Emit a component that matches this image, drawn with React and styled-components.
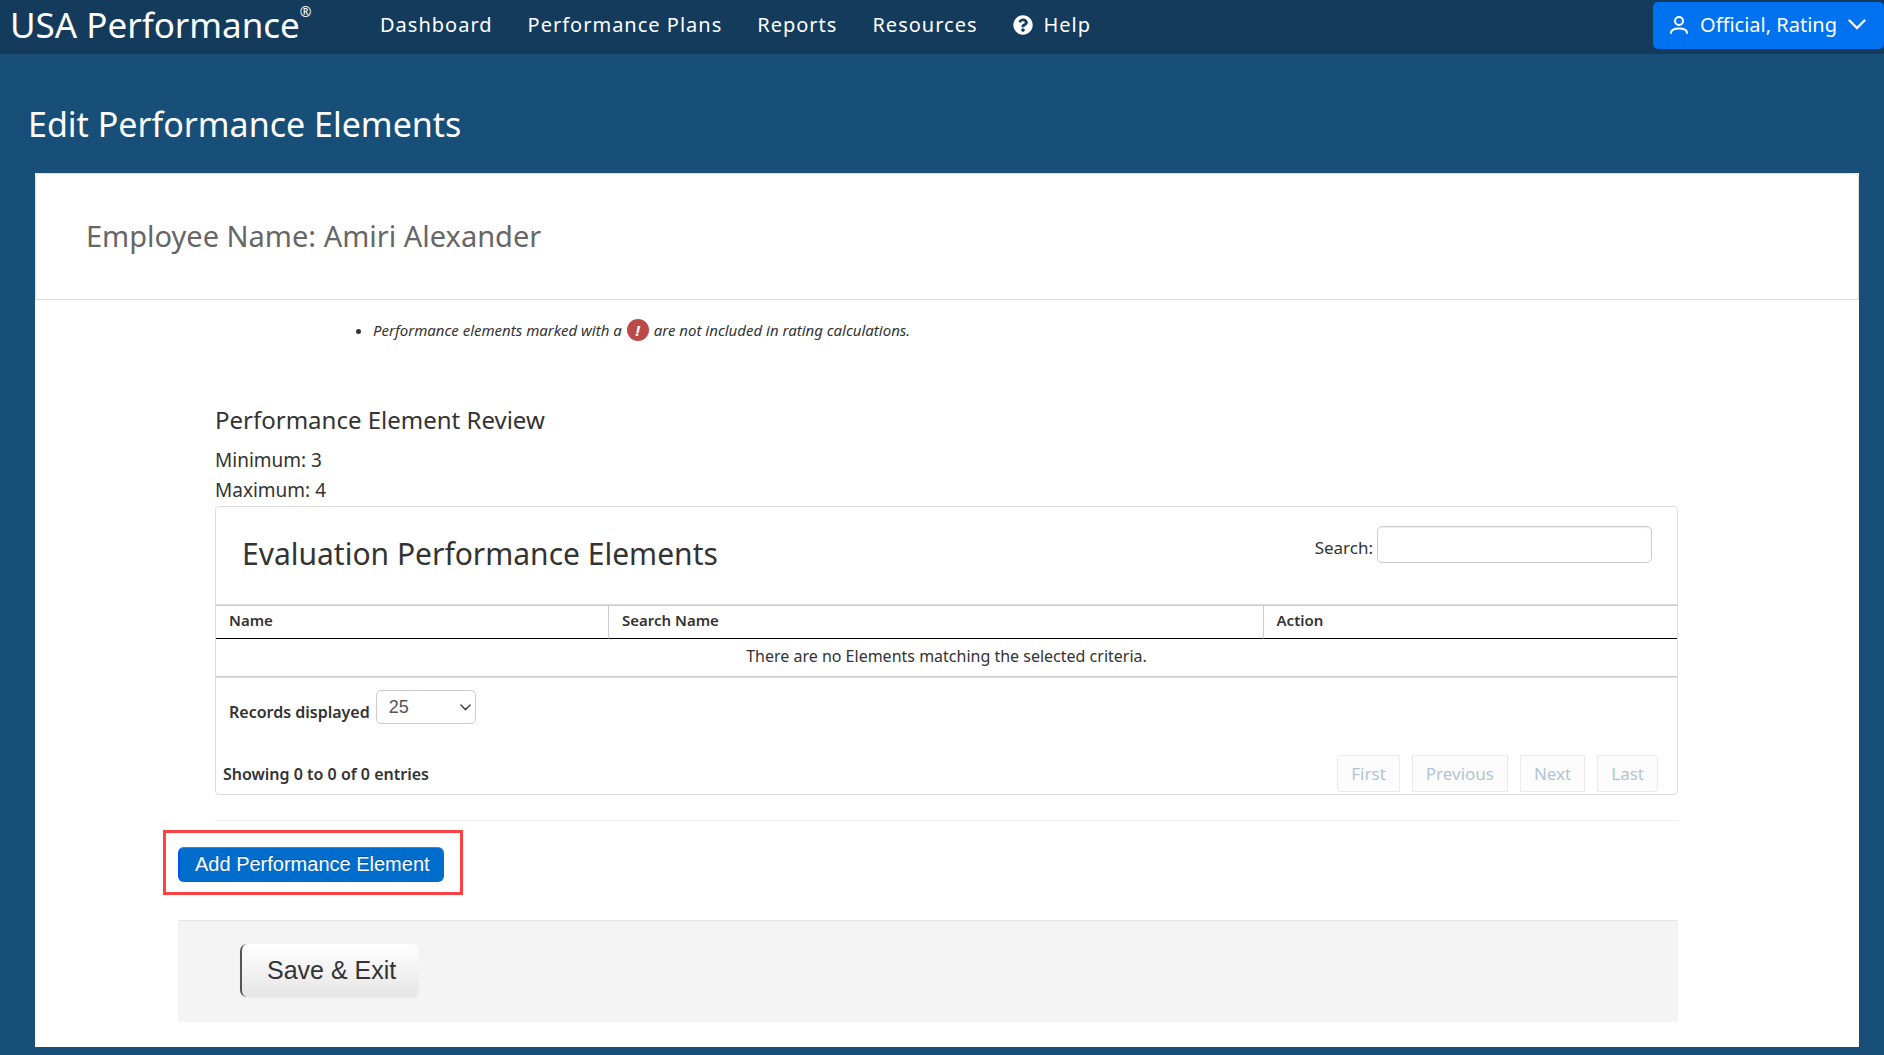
import React from "react";
import styled, { createGlobalStyle } from "styled-components";
import { FaQuestionCircle } from "react-icons/fa";

const GlobalStyle = createGlobalStyle`
	* {
		box-sizing: border-box;
	}
	body {
		margin: 0;
		background: #184f78;
		color: #333;
		font-family: "Noto Sans", sans-serif;
		font-size: 17px;
		line-height: 30px;
	}
	h1, h2, h3, p, ul {
		margin: 0;
		padding: 0;
		font-weight: 400;
	}
`;

const Header = styled.header`
	display: flex;
	align-items: flex-start;
	height: 54px;
	padding-left: 10px;
	background: #143b5c;
	color: #fff;
`;

const Brand = styled.a`
	display: flex;
	width: 370px;
	color: #fff;
	font-size: 35px;
	line-height: 50px;
	text-decoration: none;
`;

const Registered = styled.sup`
	font-size: 14px;
	line-height: 24px;
`;

const Nav = styled.nav`
	display: flex;
	gap: 35px;
`;

const NavLink = styled.a`
	display: flex;
	align-items: center;
	gap: 11px;
	color: #fff;
	font-size: 20px;
	letter-spacing: 1px;
	line-height: 50px;
	text-decoration: none;
`;

const UserButton = styled.button`
	display: flex;
	align-items: center;
	gap: 11px;
	height: 47px;
	margin: 2px 0 0 auto;
	padding: 0 18px 2px 16px;
	border: 0;
	border-radius: 5px;
	background: #0072ef;
	color: #fff;
	font: 20px "Noto Sans", sans-serif;
`;

const Title = styled.h1`
	padding: 46px 28px 24px;
	color: #fff;
	font-size: 34px;
	line-height: 49px;
`;

const Panel = styled.main`
	margin: 0 25px 8px 35px;
	padding-bottom: 25px;
	background: #fff;
`;

const Employee = styled.h2`
	padding: 37px 50px 39px;
	border: 1px solid #ddd;
	border-radius: 5px 5px 0 0;
	color: #666;
	font-size: 29px;
	line-height: 49px;
`;

const Notes = styled.ul`
	padding: 15px 0 0 338px;
	font-size: 15px;
	font-style: italic;
	line-height: 30px;
`;

const Warning = styled.span`
	display: inline-block;
	width: 22px;
	height: 22px;
	margin: 0 5px;
	border-radius: 50%;
	background: #b94a48;
	color: #fff;
	font-weight: 700;
	line-height: 22px;
	text-align: center;
`;

const Section = styled.section`
	margin: 0 181px 0 180px;
	padding-top: 60px;
`;

const SectionTitle = styled.h2`
	font-size: 24px;
	line-height: 30px;
	margin-bottom: 10px;
`;

const Limit = styled.p`
	font-size: 19px;
`;

const Box = styled.div`
	margin-top: 1px;
	border: 1px solid #ddd;
	border-radius: 4px;
`;

const BoxHead = styled.div`
	display: flex;
	justify-content: space-between;
	align-items: flex-start;
	height: 98px;
	padding: 19px 25px 0 26px;
	border-bottom: 1px solid #ddd;
`;

const BoxTitle = styled.h3`
	font-size: 30px;
	line-height: 56px;
`;

const Search = styled.label`
	display: flex;
	gap: 4px;
	line-height: 44px;
`;

const SearchInput = styled.input`
	width: 275px;
	height: 37px;
	padding: 4px 12px;
	border: 1px solid #ccc;
	border-radius: 5px;
	box-shadow: inset 0 1px 1px rgba(0, 0, 0, 0.075);
	font: inherit;
`;

const Table = styled.table`
	width: 100%;
	border-collapse: separate;
	border-spacing: 0;
	border: solid #ccc;
	border-width: 1px 0;
	table-layout: fixed;
`;

const HeadCell = styled.th`
	width: ${(props) => props.$width};
	height: 33px;
	padding: 0 13px 4px;
	border-right: 1px solid #ccc;
	border-bottom: 1px solid #000;
	font-size: 15px;
	font-weight: 600;
	line-height: 28px;
	text-align: left;
	&:last-child {
		border-right: 0;
	}
`;

const EmptyCell = styled.td`
	height: 37px;
	padding: 0 0 4px;
	font-size: 16px;
	text-align: center;
`;

const BoxFoot = styled.div`
	height: 117px;
	padding: 12px 19px 1px 7px;
	border-top: 1px solid #ddd;
`;

const Records = styled.label`
	display: flex;
	gap: 6px;
	padding-left: 6px;
	font-weight: 600;
	font-size: 16px;
	line-height: 44px;
`;

const RecordsSelect = styled.div`
	display: flex;
	align-items: center;
	position: relative;
	height: 34px;
	select {
		appearance: none;
		width: 100px;
		height: 34px;
		padding: 0 12px;
		border: 1px solid #ccc;
		border-radius: 5px;
		background: #fff;
		color: #555;
		font: 18px "Liberation Sans", Arial, sans-serif;
	}
	svg {
		position: absolute;
		right: 5px;
		pointer-events: none;
	}
`;

const Paging = styled.div`
	display: flex;
	justify-content: space-between;
	padding-top: 21px;
	line-height: 38px;
`;

const Showing = styled.span`
	font-weight: 600;
	font-size: 16px;
`;

const Pages = styled.div`
	display: flex;
	gap: 12px;
`;

const PageButton = styled.button`
	height: 37px;
	padding: 0 13px;
	border: 1px solid #eaeaea;
	background: #fcfcfc;
	color: #b2c5d5;
	font: 17px "Noto Sans", sans-serif;
	&:first-child {
		border-radius: 4px 0 0 4px;
	}
	&:last-child {
		border-radius: 0 4px 4px 0;
	}
`;

const Divider = styled.hr`
	margin: 25px 0 9px;
	border: 0;
	border-top: 1px solid #eee;
`;

const Actions = styled.div`
	margin: 0 181px 0 143px;
`;

const Highlight = styled.div`
	width: fit-content;
	margin-left: -15px;
	padding: 14px 16px 10px 12px;
	border: 3px solid #ff4141;
`;

const AddButton = styled.button`
	display: block;
	height: 35px;
	padding: 0 14px 0 15px;
	border: solid #0050ff;
	border-width: 0 0 0 2px;
	border-radius: 6px;
	background: #006dcc;
	box-shadow: inset 0 1px 0 rgba(255, 255, 255, 0.2);
	color: #fff;
	font: 20px "Liberation Sans", Arial, sans-serif;
	text-shadow: 0 -1px 0 rgba(0, 0, 0, 0.25);
`;

const FormActions = styled.div`
	margin-top: 25px;
	padding: 23px 62px 25px;
	border-top: 1px solid #e5e5e5;
	background: #f4f4f4;
`;

const SaveButton = styled.button`
	display: block;
	height: 53px;
	padding: 0 23px 0 25px;
	border: solid #555;
	border-width: 0 0 0 2px;
	border-radius: 7px;
	background: linear-gradient(#fff, #e6e6e6);
	box-shadow: 0 1px 2px rgba(0, 0, 0, 0.05);
	color: #333;
	font: 25px "Liberation Sans", Arial, sans-serif;
`;

const links = ["Dashboard", "Performance Plans", "Reports", "Resources"];
const columns = [
	{ name: "Name", width: "26.9%" },
	{ name: "Search Name", width: "44.8%" },
	{ name: "Action", width: "28.3%" },
];
const pages = ["First", "Previous", "Next", "Last"];

const UserIcon = () => (
	<svg width="20" height="20" viewBox="0 0 20 20" fill="none" stroke="#fff" strokeWidth="2" strokeLinecap="round">
		<circle cx="10" cy="6" r="4" />
		<path d="M2 18c0-3 3.500-4.500 8-4.500s8 1.500 8 4.500" />
	</svg>
);

const Chevron = ({ width, height, color }) => (
	<svg width={width} height={height} viewBox="0 0 18 11" fill="none" stroke={color} strokeWidth="2.4" strokeLinecap="round">
		<path d="M1.500 1.500L9 9l7.500-7.500" />
	</svg>
);

const App = () => (
	<>
		<GlobalStyle />
		<Header>
			<Brand href="#">
				USA Performance<Registered>®</Registered>
			</Brand>
			<Nav>
				{links.map((link) => (
					<NavLink key={link} href="#">
						{link}
					</NavLink>
				))}
				<NavLink href="#">
					<FaQuestionCircle size={20} />
					Help
				</NavLink>
			</Nav>
			<UserButton>
				<UserIcon />
				Official, Rating
				<Chevron width="18" height="11" color="#fff" />
			</UserButton>
		</Header>
		<Title>Edit Performance Elements</Title>
		<Panel>
			<Employee>Employee Name: Amiri Alexander</Employee>
			<Notes>
				<li>
					Performance elements marked with a<Warning>!</Warning>
					are not included in rating calculations.
				</li>
			</Notes>
			<Section>
				<SectionTitle>Performance Element Review</SectionTitle>
				<Limit>Minimum: 3</Limit>
				<Limit>Maximum: 4</Limit>
				<Box>
					<BoxHead>
						<BoxTitle>Evaluation Performance Elements</BoxTitle>
						<Search>
							Search:
							<SearchInput type="search" />
						</Search>
					</BoxHead>
					<Table>
						<thead>
							<tr>
								{columns.map((column) => (
									<HeadCell key={column.name} $width={column.width}>
										{column.name}
									</HeadCell>
								))}
							</tr>
						</thead>
						<tbody>
							<tr>
								<EmptyCell colSpan={3}>
									There are no Elements matching the selected criteria.
								</EmptyCell>
							</tr>
						</tbody>
					</Table>
					<BoxFoot>
						<Records>
							Records displayed
							<RecordsSelect>
								<select defaultValue="25">
									<option>10</option>
									<option>25</option>
									<option>50</option>
								</select>
								<Chevron width="11" height="7" color="#444" />
							</RecordsSelect>
						</Records>
						<Paging>
							<Showing>Showing 0 to 0 of 0 entries</Showing>
							<Pages>
								{pages.map((page) => (
									<PageButton key={page} disabled>
										{page}
									</PageButton>
								))}
							</Pages>
						</Paging>
					</BoxFoot>
				</Box>
				<Divider />
			</Section>
			<Actions>
				<Highlight>
					<AddButton>Add Performance Element</AddButton>
				</Highlight>
				<FormActions>
					<SaveButton>Save &amp; Exit</SaveButton>
				</FormActions>
			</Actions>
		</Panel>
	</>
);

export default App;
